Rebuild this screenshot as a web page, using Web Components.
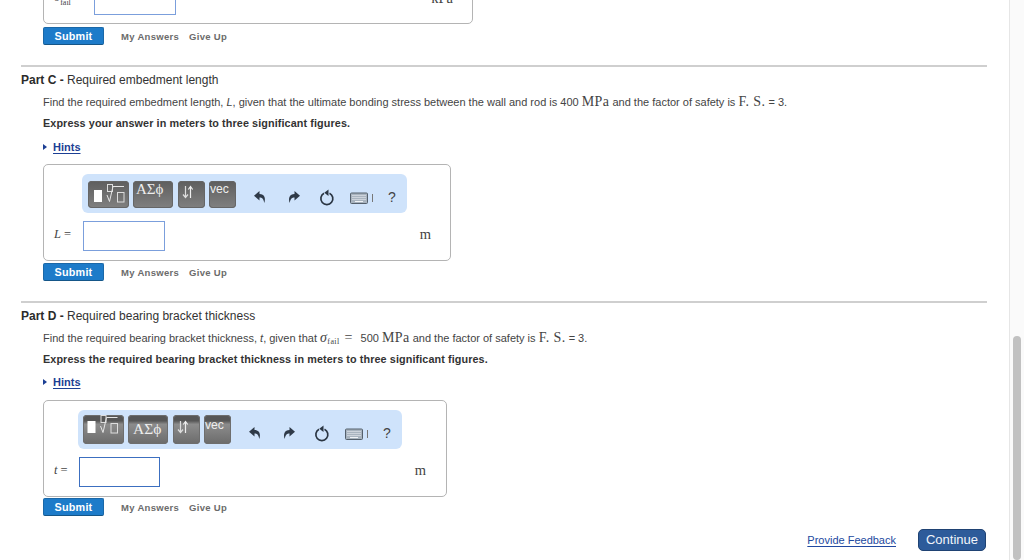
<!DOCTYPE html>
<html>
<head>
<meta charset="utf-8">
<style>
  html, body { margin: 0; height: 100%; overflow: hidden; background: #fff; }
  .m { font-family: "Liberation Serif", serif; font-size: 14px; color: #444; letter-spacing: .4px; }
  .m sub { font-size: 8px; vertical-align: -2px; line-height: 0; }
  .e { font-family: "Liberation Serif", serif; font-size: 14px; margin: 0 5px; }
</style>
</head>
<body>
<mp-page>
  <mp-answer style="--clip:-73px" label="<i>σ</i><sub>fail</sub> =" unit="kPa" field-left="94" field-width="82" box-width="430" no-tools></mp-answer>
  <mp-actions style="--top:3px"></mp-actions>

  <mp-part style="--part-top:20px" name="Part C" title="Required embedment length">
    <span slot="text">Find the required embedment length, <i>L</i>, given that the ultimate bonding stress between the wall and rod is 400 <span class="m">MPa</span> and the factor of safety is <span class="m">F. S.</span> = 3.</span>
    <span slot="ask">Express your answer in meters to three significant figures.</span>
    <mp-answer label="<i>L</i> =" unit="m" field-left="83" field-width="82" box-width="408" tools-left="82" tools-width="325"></mp-answer>
    <mp-actions style="--top:2px"></mp-actions>
  </mp-part>

  <mp-part style="--part-top:20px;--hint-top:7px;--hint-bottom:10px" name="Part D" title="Required bearing bracket thickness">
    <span slot="text">Find the required bearing bracket thickness, <i>t</i>, given that <span class="m"><i>σ</i><sub>fail</sub></span><span class="e">=</span> 500 <span class="m">MPa</span> and the factor of safety is <span class="m">F. S.</span> = 3.</span>
    <span slot="ask">Express the required bearing bracket thickness in meters to three significant figures.</span>
    <mp-answer style="--unit-right:20px" label="<i>t</i> =" unit="m" field-left="79" field-width="81" box-width="404" tools-left="78" tools-width="324" variant="low"></mp-answer>
    <mp-actions style="--top:1px"></mp-actions>
  </mp-part>

  <mp-footer></mp-footer>
</mp-page>

<script>
// page shell: content column + fake scrollbar
class MpPage extends HTMLElement {
  constructor() {
    super();
    this.attachShadow({ mode: "open" }).innerHTML = `
    <style>
      :host { display: flex; width: 1024px; height: 560px; overflow: hidden; background: #fff;
              font-family: "Liberation Sans", Arial, sans-serif; color: #333; }
      .main { width: 1009px; height: 560px; overflow: hidden; flex: none; }
      .track { flex: 1; background: #fafafa; border-left: 1px solid #e6e6e6; padding: 336px 3px 0 3px; box-sizing: border-box; height: 560px; }
      .thumb { width: 8px; height: 224px; background: #c1c1c1; border-radius: 4px; }
    </style>
    <div class="main"><slot></slot></div>
    <div class="track"><div class="thumb"></div></div>`;
  }
}

// one question part: rule, heading, text, hints, then the slotted answer box
class MpPart extends HTMLElement {
  constructor() {
    super();
    const root = this.attachShadow({ mode: "open" });
    root.innerHTML = `
    <style>
      :host { display: block; margin: var(--part-top, 20px) 22px 0 21px; }
      hr { height: 2px; margin: 0; border: 0; background: #cfcfcf; }
      h3 { margin: 5px 0 0; height: 16px; font: 12px/16px "Liberation Sans", Arial, sans-serif; color: #333; }
      h3 b { color: #2b2b2b; }
      .body { padding-left: 22px; }
      .text { height: 16px; margin-top: 6px; font-size: 11px; line-height: 16px; color: #444; white-space: nowrap; }
      .ask { height: 16px; margin-top: 5px; font-size: 10.8px; line-height: 16px; font-weight: bold; color: #333; letter-spacing: .1px; white-space: nowrap; }
      .hints { display: flex; align-items: center; height: 16px; margin-top: var(--hint-top, 8px); margin-bottom: var(--hint-bottom, 9px); font-size: 11px; font-weight: bold; color: #1c3f94; }
      .hints i { width: 0; height: 0; margin-right: 6px; border-left: 4px solid #1c3f94; border-top: 3.5px solid transparent; border-bottom: 3.5px solid transparent; }
      .hints u { text-underline-offset: 2px; }
    </style>
    <hr>
    <h3><b></b> <span class="t"></span></h3>
    <div class="body">
      <div class="text"><slot name="text"></slot></div>
      <div class="ask"><slot name="ask"></slot></div>
      <div class="hints"><i></i><u>Hints</u></div>
      <slot></slot>
    </div>`;
    root.querySelector("b").textContent = this.getAttribute("name") + " -";
    root.querySelector(".t").textContent = this.getAttribute("title");
    this.removeAttribute("title");
  }
}

// grey toolbar buttons and the undo/redo icons
const ICONS = {
  radical: `<rect x="6" y="9" width="8" height="12" fill="#fff"/><rect x="19.500" y="3.500" width="5" height="7" fill="none" stroke="#ddd"/><path d="M19 14l2.500 6.500L25 5.500h11" fill="none" stroke="#e6e6e6"/><rect x="29.500" y="11.500" width="6.500" height="9.500" fill="none" stroke="#ddd"/>`,
  arrows: `<svg width="15" height="14" viewBox="0 0 15 14"><path d="M4.500 1v11M2 9.500l2.500 3 2.500-3" fill="none" stroke="#ddd" stroke-width="1.200"/><path d="M9.500 13V2M7.300 4.500l2.200-3 2.200 3" fill="none" stroke="#eee" stroke-width="1.200"/></svg>`,
  undo: `<svg width="14" height="14" viewBox="0 0 14 14"><path d="M6.500 1L1 5.800l5.500 4.700V7.500c2.400 0 4 .9 4.800 5.500 1.600-4.900.2-8.900-4.800-9z" fill="#2f3a48"/></svg>`,
  redo: `<svg width="14" height="14" viewBox="0 0 14 14"><path d="M7.500 1L13 5.800l-5.500 4.700V7.500c-2.400 0-4 .9-4.800 5.500C1.100 8.100 2.500 4.100 7.500 4z" fill="#2f3a48"/></svg>`,
  reset: `<svg width="16" height="17" viewBox="0 0 16 17"><path d="M5 4.300a6 6 0 1 0 5.500-.1" fill="none" stroke="#2a3542" stroke-width="1.700"/><path d="M9.500 0.500v6.500l-4.200-3.200z" fill="#2a3542"/></svg>`,
  keys: `<svg width="18" height="12" viewBox="0 0 18 12"><rect x=".5" y="1" width="17" height="10.500" rx="1" fill="#a9b4bf" stroke="#55606c"/><path d="M2.500 3.500h13M2.500 5.500h13M2.500 7.500h13" stroke="#f0f3f6" stroke-dasharray="1 1"/><path d="M5 9.500h8" stroke="#f0f3f6"/></svg>`
};

class MpToolbar extends HTMLElement {
  constructor() {
    super();
    const low = this.getAttribute("variant") === "low";
    this.attachShadow({ mode: "open" }).innerHTML = `
    <style>
      :host { display: flex; align-items: center; box-sizing: border-box; height: 39px; padding: 0 0 0 ${low ? 5 : 6}px;
              background: #cfe3fb; border-radius: 6px; color: #333; }
      .btn { box-sizing: border-box; flex: none; height: ${low ? 29 : 27}px; margin-top: ${low ? 0 : 2}px; border-radius: 4px; overflow: hidden;
             color: #eee; background: ${low ? "linear-gradient(#565656 0 20%, #8c8c8c 32%, #6b6b6b 100%)" : "linear-gradient(#5e5e5e, #808080)"};
             box-shadow: inset 0 0 0 1px ${low ? "#6e6e6e" : "#666"}; }
      .btn svg { display: block; }
      .sym { width: 40px; margin-left: 4px; padding-left: ${low ? 5 : 3}px; font: ${low ? 15.5 : 15}px/${low ? 27 : 16}px "Liberation Serif", serif; white-space: nowrap; }
      .arr { width: 27px; margin-left: 5px; padding: ${low ? 5 : 4}px 0 0 3px; }
      .vec { width: 27px; margin-left: 4px; padding-left: 1px; font: 12.200px/${low ? 20 : 16}px "Liberation Sans", Arial, sans-serif; }
      .ic { display: flex; flex: none; justify-content: center; margin-top: 7px; }
      .bar { width: 1px; height: 8px; background: #777; margin: 8px 0 0 4px; flex: none; }
      .q { font: 14px "Liberation Sans", Arial, sans-serif; color: #444; margin: 7px 0 0 15px; }
    </style>
    <div class="btn" style="width:41px"><svg width="41" height="29" viewBox="0 0 41 29"><g transform="translate(${low ? "-1.500 -3" : "0 0"})">${ICONS.radical}</g></svg></div>
    <div class="btn sym">ΑΣϕ</div>
    <div class="btn arr">${ICONS.arrows}</div>
    <div class="btn vec">vec</div>
    <div class="ic" style="margin-left:17px">${ICONS.undo}</div>
    <div class="ic" style="margin-left:20px">${ICONS.redo}</div>
    <div class="ic" style="margin-left:18px">${ICONS.reset}</div>
    <div class="ic" style="margin-left:15px;margin-top:9px">${ICONS.keys}</div>
    <div class="bar"></div>
    <div class="q">?</div>`;
  }
}

// rounded answer box with optional toolbar
class MpAnswer extends HTMLElement {
  constructor() {
    super();
    const a = n => this.getAttribute(n);
    const boxLeft = 43;
    const tools = this.hasAttribute("no-tools") ? "" :
      `<mp-toolbar class="tb" variant="${a("variant") || ""}" style="margin-left:${a("tools-left") - boxLeft - 1}px;width:${a("tools-width")}px"></mp-toolbar>`;
    this.attachShadow({ mode: "open" }).innerHTML = `
    <style>
      :host { display: block; box-sizing: border-box; width: ${a("box-width")}px; height: 97px; margin: var(--clip, 0) 0 0 0;
              border: 1px solid #b4b4b4; border-radius: 5px; background: #fff; }
      :host([no-tools]) { margin-left: 43px; }
      .tb { margin-top: 9px; }
      .row { display: flex; align-items: center; height: 30px; margin-top: 8px; padding-right: var(--unit-right, 19px); }
      :host([no-tools]) .row { margin-top: 57px; }
      .lab { width: ${a("field-left") - boxLeft - 1}px; flex: none; box-sizing: border-box; padding: 0 0 3px 10px; font: 12.500px "Liberation Serif", serif; color: #444; white-space: nowrap; }
      sub { font-size: 8px; }
      .in { box-sizing: border-box; width: ${a("field-width")}px; height: 30px; flex: none; background: #fff; border: 1px solid ${a("variant") ? "#3c6fc0" : "#7b9fdc"}; }
      .u { margin-left: auto; padding-bottom: 3px; font: 14.500px "Liberation Serif", serif; color: #444; }
    </style>
    ${tools}
    <div class="row"><div class="lab">${a("label")}</div><div class="in"></div><div class="u">${a("unit")}</div></div>`;
  }
}

// Submit / My Answers / Give Up row
class MpActions extends HTMLElement {
  constructor() {
    super();
    this.attachShadow({ mode: "open" }).innerHTML = `
    <style>
      :host { display: flex; align-items: center; height: 18px; margin-top: var(--top, 2px); }
      .sub { box-sizing: border-box; width: 61px; height: 18px; background: #1d7bc9; border: 1px solid #1a68a8; border-bottom-color: #155688;
             border-radius: 2px; color: #fff; font-size: 10.800px; font-weight: bold; line-height: 16px; text-align: center; letter-spacing: .2px; }
      .l { font-size: 9.500px; font-weight: bold; color: #6b6b6b; letter-spacing: .3px; white-space: nowrap; }
    </style>
    <div class="sub">Submit</div>
    <div class="l" style="margin-left:17px">My Answers</div>
    <div class="l" style="margin-left:10px">Give Up</div>`;
    if (!this.closest("mp-part")) this.style.marginLeft = "43px";
  }
}

class MpFooter extends HTMLElement {
  constructor() {
    super();
    this.attachShadow({ mode: "open" }).innerHTML = `
    <style>
      :host { display: flex; justify-content: flex-end; align-items: center; height: 22px; margin: 13px 23px 0 0; }
      a { font-size: 11px; color: #2148a0; text-decoration: underline; text-underline-offset: 2px; margin-right: 22px; }
      .go { box-sizing: border-box; width: 68px; height: 22px; background: #2d5b9a; border: 1px solid #1f4273; border-radius: 5px;
            color: #f2f5fa; font-size: 13px; line-height: 20px; text-align: center; }
    </style>
    <a>Provide Feedback</a><div class="go">Continue</div>`;
  }
}

customElements.define("mp-toolbar", MpToolbar);
customElements.define("mp-answer", MpAnswer);
customElements.define("mp-actions", MpActions);
customElements.define("mp-part", MpPart);
customElements.define("mp-footer", MpFooter);
customElements.define("mp-page", MpPage);
</script>
</body>
</html>
